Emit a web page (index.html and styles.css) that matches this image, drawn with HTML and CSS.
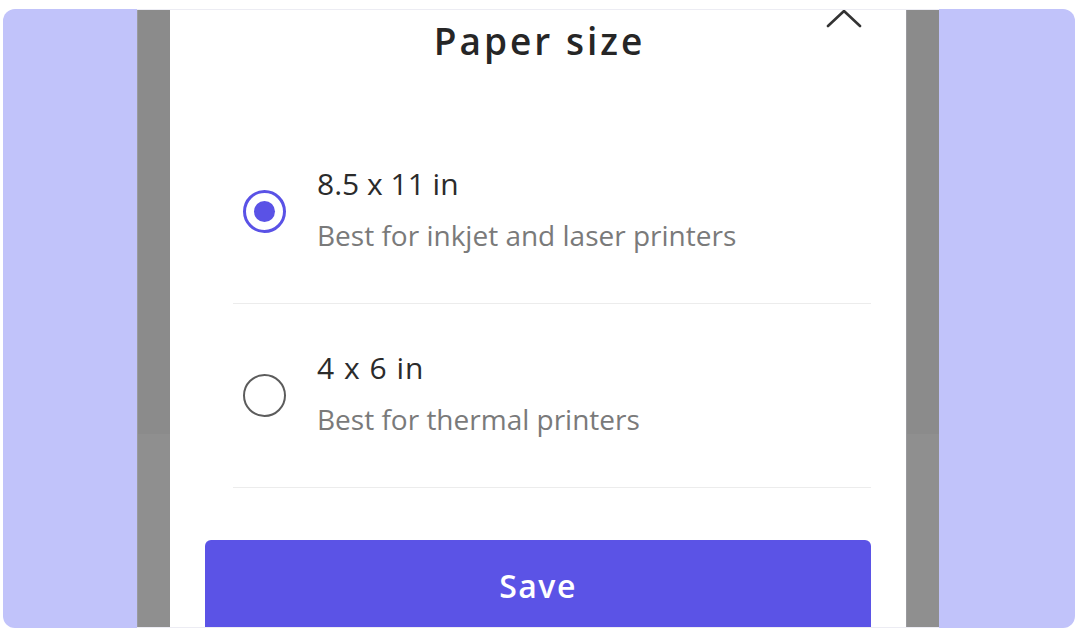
FILE: index.html
```html
<!DOCTYPE html>
<html lang="en">
<head>
<meta charset="utf-8">
<title>Paper size</title>
<link rel="stylesheet" href="styles.css">
</head>
<body>
<div class="frame">
  <div class="side side-left"></div>
  <div class="stage">
    <div class="shade"></div>
    <div class="modal">
      <svg class="close" width="36" height="18" viewBox="0 0 36 18" aria-label="Close">
        <polyline points="2,16 18,1 34,16" fill="none" stroke="#333333" stroke-width="2.6" stroke-linecap="round" stroke-linejoin="round"/>
      </svg>
      <h1 class="title">Paper size</h1>
      <ul class="options">
        <li class="option">
          <span class="radio radio-checked"></span>
          <div class="label">
            <div class="name">8.5 x 11 in</div>
            <div class="desc">Best for inkjet and laser printers</div>
          </div>
        </li>
        <li class="option">
          <span class="radio"></span>
          <div class="label">
            <div class="name">4 x 6 in</div>
            <div class="desc">Best for thermal printers</div>
          </div>
        </li>
      </ul>
      <button class="save" type="button">Save</button>
    </div>
    <div class="shade"></div>
  </div>
  <div class="side side-right"></div>
</div>
</body>
</html>
```

FILE: styles.css
```css
* {
  box-sizing: border-box;
}

html, body {
  margin: 0;
  padding: 0;
  background: #ffffff;
}

body {
  font-family: "Open Sans", "Liberation Sans", sans-serif;
  padding: 9px 0 0 3px;
}

.frame {
  width: 1072px;
  height: 619px;
  border-radius: 12px;
  overflow: hidden;
  background: #c1c3fa;
  display: flex;
}

.side-left {
  width: 134px;
  flex: none;
}

.side-right {
  flex: 1;
}

.stage {
  width: 802px;
  flex: none;
  display: flex;
  border-top: 1px solid #ececf3;
  border-bottom: 1px solid #ececf3;
}

.shade {
  width: 33px;
  flex: none;
  background: linear-gradient(to bottom, #8b8b8b 0, #8b8b8b 424px, #8f8f8f 424px, #8f8f8f 100%);
  border-left: 1px solid #9a9a9e;
}

.modal {
  flex: 1;
  background: #ffffff;
  position: relative;
  overflow: hidden;
  display: flex;
  flex-direction: column;
}

.close {
  position: absolute;
  left: 656px;
  top: 0;
}

.title {
  margin: 0;
  padding-top: 9px;
  padding-left: 3px;
  font-size: 37px;
  line-height: 44px;
  font-weight: 600;
  letter-spacing: 3px;
  text-align: center;
  color: #262626;
}

.options {
  list-style: none;
  margin: 57px 35px 0 63px;
  padding: 0;
}

.option {
  height: 184px;
  border-bottom: 1px solid #ececec;
  display: flex;
  align-items: center;
  padding-left: 10px;
  gap: 31px;
}

.radio {
  width: 43px;
  height: 43px;
  flex: none;
  border-radius: 50%;
  border: 2px solid #5c5c5c;
  display: flex;
  align-items: center;
  justify-content: center;
}

.radio-checked {
  border: 3px solid #5a52e6;
}

.radio-checked::after {
  content: "";
  width: 21px;
  height: 21px;
  border-radius: 50%;
  background: #5a52e6;
}

.label {
  padding-bottom: 5px;
}

.name {
  font-size: 30px;
  line-height: 40px;
  color: #2b2b2b;
}

.option + .option .name {
  letter-spacing: 1px;
}

.desc {
  margin-top: 11px;
  font-size: 28px;
  line-height: 40px;
  color: #7a7a7a;
}

.save {
  margin: 52px 35px 0;
  height: 100px;
  flex: none;
  border: none;
  border-radius: 6px;
  background: #5b53e6;
  color: #ffffff;
  font-family: "Open Sans", "Liberation Sans", sans-serif;
  font-size: 32px;
  font-weight: 600;
  letter-spacing: 1.5px;
  line-height: 48px;
  padding: 0 0 9px;
  display: block;
  text-align: center;
}
```
